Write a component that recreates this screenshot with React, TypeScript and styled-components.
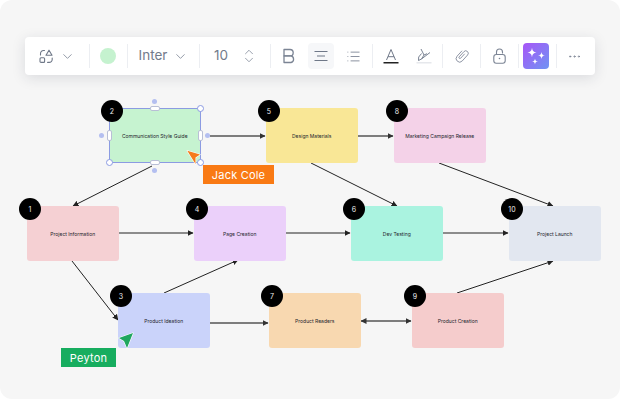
import React from 'react'
import styled, { createGlobalStyle } from 'styled-components'
import { ChevronDown, ChevronUp, List, MoreHorizontal } from 'lucide-react'

const GlobalStyle = createGlobalStyle`
  html, body {
    margin: 0;
    background: #fff;
    font-family: Inter, "Liberation Sans", sans-serif;
  }
`

const Card = styled.div`
  position: relative;
  box-sizing: border-box;
  width: 620px;
  height: 399px;
  padding: 37px 25px 0;
  background: #f6f6f6;
  border-radius: 12px;
  overflow: hidden;
`

const Toolbar = styled.div`
  position: relative;
  z-index: 2;
  display: flex;
  align-items: center;
  width: 570px;
  height: 38px;
  background: #fff;
  border-radius: 4px;
  box-shadow: 0 3px 14px rgba(30, 40, 60, 0.13);
  color: #7b8494;
`

const Group = styled.div<{ $w: number; $gap?: number }>`
  display: flex;
  align-items: center;
  justify-content: center;
  gap: ${p => p.$gap ?? 0}px;
  width: ${p => p.$w}px;
  height: 100%;
`

const Divider = styled.div`
  flex: none;
  width: 1px;
  height: 24px;
  background: #eceef2;
`

const Swatch = styled.div`
  width: 16px;
  height: 16px;
  margin-right: 1px;
  border-radius: 50%;
  background: #c5f2cf;
`

const ToolText = styled.span`
  font-size: 13.5px;
  line-height: 1;
  color: #727b8b;
`

const Stepper = styled.div`
  display: flex;
  flex-direction: column;
  align-items: center;
  margin-left: 1px;
  svg:first-child {
    margin-bottom: -5px;
  }
  svg:last-child {
    margin-top: -1px;
  }
`

const ActiveTool = styled.div`
  display: flex;
  align-items: center;
  justify-content: center;
  width: 26px;
  height: 26px;
  border-radius: 4px;
  background: #f6f7f9;
`

const MagicTile = styled.div`
  display: flex;
  align-items: center;
  justify-content: center;
  width: 26px;
  height: 26px;
  margin-right: 3px;
  border-radius: 4px;
  background: linear-gradient(135deg, #a855f7, #6f94f3);
`

const Canvas = styled.div`
  position: absolute;
  inset: 0;
`

const Wires = styled.svg`
  position: absolute;
  left: 0;
  top: 0;
`

const Node = styled.div<{ $x: number; $y: number; $bg: string; $selected?: boolean }>`
  position: absolute;
  left: ${p => p.$x}px;
  top: ${p => p.$y}px;
  box-sizing: border-box;
  display: flex;
  align-items: center;
  justify-content: center;
  padding-top: 1px;
  width: 91.5px;
  height: 55px;
  background: ${p => p.$bg};
  border-radius: ${p => (p.$selected ? 0 : 3)}px;
  border: ${p => (p.$selected ? '1px solid #8c9be2' : 'none')};
`

const Label = styled.span`
  font-size: 5px;
  line-height: 1;
  color: #24242c;
  white-space: nowrap;
`

const Badge = styled.div<{ $selected?: boolean }>`
  position: absolute;
  left: ${p => (p.$selected ? -9 : -8)}px;
  top: ${p => (p.$selected ? -9 : -8)}px;
  z-index: 1;
  display: flex;
  align-items: center;
  justify-content: center;
  width: 22px;
  height: 22px;
  border-radius: 50%;
  background: #000;
  color: #eee;
  font-size: 7px;
`

const Pill = styled.div<{ $side: 'top' | 'bottom' | 'left' | 'right' }>`
  position: absolute;
  box-sizing: border-box;
  background: #fff;
  border: 1px solid #b9bfd6;
  border-radius: 2px;
  width: ${p => (p.$side === 'top' || p.$side === 'bottom' ? 10 : 5)}px;
  height: ${p => (p.$side === 'top' || p.$side === 'bottom' ? 5 : 11)}px;
  ${p => (p.$side === 'top' || p.$side === 'bottom' ? 'left: calc(50% - 5px);' : 'top: calc(50% - 5.5px);')}
  ${p => p.$side}: -3px;
`

const Corner = styled.div<{ $v: 'top' | 'bottom'; $h: 'left' | 'right' }>`
  position: absolute;
  box-sizing: border-box;
  width: 7px;
  height: 7px;
  background: #fff;
  border: 1px solid #8c9be2;
  border-radius: 50%;
  ${p => p.$v}: -4px;
  ${p => p.$h}: -4px;
`

const Dot = styled.div<{ $side: 'top' | 'bottom' | 'left' | 'right' }>`
  position: absolute;
  width: 5px;
  height: 5px;
  background: #b4bff0;
  border-radius: 50%;
  ${p => (p.$side === 'top' || p.$side === 'bottom' ? 'left: calc(50% - 2.5px);' : 'top: calc(50% - 2.5px);')}
  ${p => p.$side}: ${p => (p.$side === 'top' || p.$side === 'right' ? -10 : -11)}px;
`

const CursorTag = styled.div<{ $x: number; $y: number; $w: number; $bg: string }>`
  position: absolute;
  left: ${p => p.$x}px;
  top: ${p => p.$y}px;
  z-index: 1;
  display: flex;
  align-items: center;
  justify-content: center;
  width: ${p => p.$w}px;
  height: 19px;
  background: ${p => p.$bg};
  color: #fff;
  font-size: 11px;
  letter-spacing: 0.2px;
`

const CursorMark = styled.svg<{ $x: number; $y: number }>`
  position: absolute;
  left: ${p => p.$x}px;
  top: ${p => p.$y}px;
  z-index: 1;
`

const nodes = [
  { n: 1, x: 27, y: 206, bg: '#f5d0d3', text: 'Project Information' },
  { n: 2, x: 109, y: 108, bg: '#c6f3d0', text: 'Communication Style Guide', selected: true },
  { n: 3, x: 118, y: 293, bg: '#cad3fa', text: 'Product Ideation' },
  { n: 4, x: 194, y: 206, bg: '#ebd0fa', text: 'Page Creation' },
  { n: 5, x: 266, y: 108, bg: '#f9e796', text: 'Design Materials' },
  { n: 6, x: 351, y: 206, bg: '#aaf3e0', text: 'Dev Testing' },
  { n: 7, x: 269, y: 293, bg: '#f8d8b0', text: 'Product Readers' },
  { n: 8, x: 394, y: 108, bg: '#f4d2e8', text: 'Marketing Campaign Release' },
  { n: 9, x: 412, y: 293, bg: '#f5cccc', text: 'Product Creation' },
  { n: 10, x: 509, y: 206, bg: '#e2e7f0', text: 'Project Launch' },
]

// heavy = the thicker grey connectors
const edges = [
  { d: 'M210 136H265', heavy: true },
  { d: 'M357 136H393', heavy: true },
  { d: 'M311 163L397 206' },
  { d: 'M439 163L553 206' },
  { d: 'M152 166L73 206' },
  { d: 'M118 233H193' },
  { d: 'M72 261L118 320' },
  { d: 'M164 293L238 260' },
  { d: 'M285 233H350' },
  { d: 'M442 233H508' },
  { d: 'M210 323H268', heavy: true },
  { d: 'M361 321H411', heavy: true, both: true },
  { d: 'M457 293L553 261' },
]

const ShapesIcon = () => (
  <svg width="14" height="15" viewBox="0 0 14 15" fill="none" stroke="#6f7888" strokeWidth="1.1">
    <path d="M1.5 6V4.5A3 3 0 0 1 4.5 1.5H5.5" strokeLinecap="round" />
    <path d="M10 1.2L13 6.3H7z" strokeLinejoin="round" />
    <rect x="1" y="8.8" width="4.6" height="4.6" rx="1" />
    <path d="M8.6 13.4h1.6a3 3 0 0 0 3-3V9" strokeLinecap="round" />
  </svg>
)

const BoldIcon = () => (
  <svg width="14" height="16" viewBox="0 0 14 16" fill="none" stroke="#7b8494" strokeWidth="1.3" strokeLinejoin="round">
    <path d="M2 1.5H8a3.2 3.2 0 0 1 0 6.4H2z" />
    <path d="M2 7.9H9a3.4 3.4 0 0 1 0 6.6H2z" />
  </svg>
)

const AlignIcon = () => (
  <svg width="14" height="12" viewBox="0 0 14 12" fill="none" stroke="#6f7888" strokeWidth="1.1">
    <path d="M0.5 1.5H13.5M3 6H11M0.5 10.5H13.5" />
  </svg>
)

const TextColorIcon = () => (
  <svg width="16" height="16" viewBox="0 0 16 16" fill="none">
    <path d="M3.5 12L8 1.5L12.5 12M5 8.7H11" stroke="#6f7888" strokeWidth="1" />
    <rect x="0.5" y="14" width="15" height="1.5" fill="#222" />
  </svg>
)

const HighlightIcon = () => (
  <svg width="16" height="16" viewBox="0 0 16 16" fill="none">
    <path d="M5 1L8 7L5.5 11L2.5 12.5L2.7 9L5.5 5.5M5.5 11L9 8.3L14 4.5M8 7L11 5.7" stroke="#7b8494" strokeWidth="1" strokeLinejoin="round" />
    <rect x="0.5" y="14" width="15" height="1.5" fill="#e6e8ec" />
  </svg>
)

const ClipIcon = () => (
  <svg width="16" height="16" viewBox="0 0 16 16" fill="none" stroke="#8a92a1" strokeWidth="0.9" strokeLinecap="round">
    <g transform="rotate(42 8 8)">
      <path d="M4.5 4.5V11.5a3.5 3.5 0 0 0 7 0V3.5a2.5 2.5 0 0 0 -5 0V10.5a1 1 0 0 0 2 0V5" />
    </g>
  </svg>
)

const LockIcon = () => (
  <svg width="13" height="16" viewBox="0 0 13 16" fill="none" stroke="#7b8494" strokeWidth="1.1">
    <path d="M3.5 6.5V4a3 3 0 0 1 6 0V5" strokeLinecap="round" />
    <rect x="0.8" y="6.5" width="11.4" height="8.8" rx="2.5" />
    <circle cx="6.5" cy="10.5" r="0.8" fill="#7b8494" stroke="none" />
  </svg>
)

const SparkleIcon = () => (
  <svg width="26" height="26" viewBox="0 0 26 26" fill="#fff">
    <path d="M9 4.5C9.5 8 10.3 8.8 13.5 9.5C10.3 10.2 9.5 11 9 14.5C8.5 11 7.7 10.2 4.5 9.500C7.7 8.8 8.5 8 9 4.5z" />
    <path d="M18.5 9C18.9 11.5 19.5 12.100 22 12.5C19.5 12.9 18.9 13.5 18.5 16C18.1 13.5 17.5 12.9 15 12.5C17.5 12.1 18.1 11.5 18.5 9z" />
    <path d="M12 15.5C12.3 17.6 12.9 18.2 15 18.5C12.9 18.8 12.3 19.4 12 21.5C11.7 19.4 11.1 18.8 9 18.5C11.1 18.2 11.7 17.6 12 15.5z" />
  </svg>
)

const Arrowhead = ({ id, color }: { id: string; color: string }) => (
  <marker id={id} markerUnits="userSpaceOnUse" markerWidth="6" markerHeight="6" refX="5.5" refY="3" orient="auto-start-reverse">
    <path d="M0 0L6 3L0 6z" fill={color} />
  </marker>
)

const App: React.FC = () => {
  return (
    <>
      <GlobalStyle />
      <Card>
        <Canvas>
          <Wires width="620" height="399">
            <defs>
              <Arrowhead id="head" color="#222" />
              <Arrowhead id="headHeavy" color="#333" />
            </defs>
            {edges.map(e => (
              <path
                key={e.d}
                d={e.d}
                fill="none"
                stroke={e.heavy ? '#555' : '#222'}
                strokeWidth={e.heavy ? 1.5 : 1}
                markerEnd={`url(#${e.heavy ? 'headHeavy' : 'head'})`}
                markerStart={e.both ? 'url(#headHeavy)' : undefined}
              />
            ))}
          </Wires>
          {nodes.map(item => (
            <Node key={item.n} $x={item.x} $y={item.y} $bg={item.bg} $selected={item.selected}>
              <Badge $selected={item.selected}>{item.n}</Badge>
              <Label>{item.text}</Label>
              {item.selected && (
                <>
                  <Pill $side="top" />
                  <Pill $side="bottom" />
                  <Pill $side="left" />
                  <Pill $side="right" />
                  <Corner $v="top" $h="right" />
                  <Corner $v="bottom" $h="left" />
                  <Corner $v="bottom" $h="right" />
                  <Dot $side="top" />
                  <Dot $side="bottom" />
                  <Dot $side="left" />
                  <Dot $side="right" />
                </>
              )}
            </Node>
          ))}
          <CursorMark $x={184} $y={148} width="20" height="20" viewBox="0 0 20 20">
            <path d="M3.3 2.7L16 6.5L11.5 9.5L11.5 16z" fill="#f57c1b" stroke="#fff" strokeWidth="1.2" strokeLinejoin="round" paintOrder="stroke" />
          </CursorMark>
          <CursorTag $x={203} $y={165} $w={71} $bg="#f97a14">Jack Cole</CursorTag>
          <CursorMark $x={116} $y={331} width="20" height="20" viewBox="0 0 20 20">
            <path d="M17 2L3 7L8 10L11 17z" fill="#1fa65f" stroke="#fff" strokeWidth="1.2" strokeLinejoin="round" paintOrder="stroke" />
          </CursorMark>
          <CursorTag $x={61} $y={348} $w={55} $bg="#17ad5f">Peyton</CursorTag>
        </Canvas>
        <Toolbar>
          <Group $w={64} $gap={7}>
            <ShapesIcon />
            <ChevronDown size={15} strokeWidth={1.3} />
          </Group>
          <Divider />
          <Group $w={37}>
            <Swatch />
          </Group>
          <Divider />
          <Group $w={71} $gap={6}>
            <ToolText>Inter</ToolText>
            <ChevronDown size={15} strokeWidth={1.3} />
          </Group>
          <Divider />
          <Group $w={70} $gap={13}>
            <ToolText>10</ToolText>
            <Stepper>
              <ChevronUp size={14} strokeWidth={1.3} />
              <ChevronDown size={14} strokeWidth={1.3} />
            </Stepper>
          </Group>
          <Divider />
          <Group $w={101} $gap={12}>
            <BoldIcon />
            <ActiveTool>
              <AlignIcon />
            </ActiveTool>
            <List size={15} strokeWidth={1.4} />
          </Group>
          <Divider />
          <Group $w={69} $gap={17}>
            <TextColorIcon />
            <HighlightIcon />
          </Group>
          <Divider />
          <Group $w={37}>
            <ClipIcon />
          </Group>
          <Divider />
          <Group $w={37}>
            <LockIcon />
          </Group>
          <Divider />
          <Group $w={37}>
            <MagicTile>
              <SparkleIcon />
            </MagicTile>
          </Group>
          <Divider />
          <Group $w={34}>
            <MoreHorizontal size={15} strokeWidth={1.4} />
          </Group>
        </Toolbar>
      </Card>
    </>
  )
}

export default App
